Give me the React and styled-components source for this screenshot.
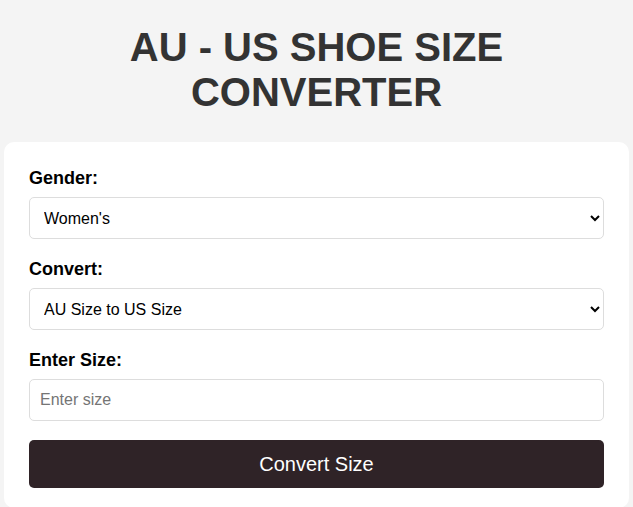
import React from "react";
import styled, { createGlobalStyle } from "styled-components";

const Global = createGlobalStyle`
  html, body { margin: 0; padding: 0; background: #f4f4f4; }
  body { font-family: "Liberation Sans", Arial, sans-serif; }
  * { box-sizing: border-box; }
`;

const Page = styled.div`
  display: flex;
  flex-direction: column;
  padding: 0 4px 0 4px;
`;

const Title = styled.h1`
  margin: 25px 0 27px 0;
  padding: 0;
  text-align: center;
  font-size: 40px;
  font-weight: 700;
  color: #333;
`;

const Card = styled.div`
  width: 625px;
  background: #fff;
  border-radius: 10px;
  padding: 26px 25px 20px 25px;
  display: flex;
  flex-direction: column;
`;

const Label = styled.label`
  display: block;
  font-size: 18px;
  font-weight: 700;
  color: #000;
  margin-bottom: 8px;
`;

const Select = styled.select`
  width: 100%;
  height: 42px;
  padding: 0 10px;
  font-family: "Liberation Sans", Arial, sans-serif;
  font-size: 16px;
  color: #000;
  background: #fff;
  border: 1px solid #ddd;
  border-radius: 5px;
  margin-bottom: 20px;
`;

const Input = styled.input`
  width: 100%;
  height: 42px;
  padding: 0 10px;
  font-family: "Liberation Sans", Arial, sans-serif;
  font-size: 16px;
  border: 1px solid #ddd;
  border-radius: 5px;
  margin-bottom: 19px;
  &::placeholder { color: #757575; }
`;

const Button = styled.button`
  width: 100%;
  height: 48px;
  border: none;
  border-radius: 5px;
  background: #2f2327;
  color: #fff;
  font-family: "Liberation Sans", Arial, sans-serif;
  font-size: 20px;
  cursor: pointer;
`;

export default function App() {
  return (
    <>
      <Global />
      <Page>
        <Title>AU - US SHOE SIZE CONVERTER</Title>
        <Card>
          <Label htmlFor="gender">Gender:</Label>
          <Select id="gender" defaultValue="women">
            <option value="women">Women's</option>
            <option value="men">Men's</option>
          </Select>
          <Label htmlFor="convert">Convert:</Label>
          <Select id="convert" defaultValue="au-us">
            <option value="au-us">AU Size to US Size</option>
            <option value="us-au">US Size to AU Size</option>
          </Select>
          <Label htmlFor="size">Enter Size:</Label>
          <Input id="size" type="text" placeholder="Enter size" />
          <Button>Convert Size</Button>
        </Card>
      </Page>
    </>
  );
}
